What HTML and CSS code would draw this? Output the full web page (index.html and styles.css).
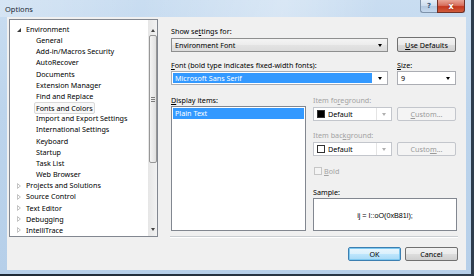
FILE: index.html
```html
<!DOCTYPE html>
<html>

<head>
    <title>Options</title>
    <link rel="stylesheet" href="styles.css">
</head>
<body>
    <div class="window">
        <div class="titlebar">
            <span class="title">Options</span>
            <div class="caption-buttons">
                <span class="caption-btn help">?</span>
                <span class="caption-btn close">x</span>
            </div>
        </div>

        <div class="client">
            <div class="tree">
                <div class="tree-list">
                    <div class="tree-row"><span class="twisty"><span class="open"></span></span>Environment</div>
                    <div class="tree-row child">General</div>
                    <div class="tree-row child">Add-in/Macros Security</div>
                    <div class="tree-row child">AutoRecover</div>
                    <div class="tree-row child">Documents</div>
                    <div class="tree-row child">Extension Manager</div>
                    <div class="tree-row child">Find and Replace</div>
                    <div class="tree-row child"><span class="selected">Fonts and Colors</span></div>
                    <div class="tree-row child">Import and Export Settings</div>
                    <div class="tree-row child">International Settings</div>
                    <div class="tree-row child">Keyboard</div>
                    <div class="tree-row child">Startup</div>
                    <div class="tree-row child">Task List</div>
                    <div class="tree-row child">Web Browser</div>
                    <div class="tree-row"><span class="twisty"><svg class="closed" viewBox="0 0 5 7"><path d="M0.5 0.5 L4.2 3.5 L0.5 6.5 Z"/></svg></span>Projects and Solutions</div>
                    <div class="tree-row"><span class="twisty"><svg class="closed" viewBox="0 0 5 7"><path d="M0.5 0.5 L4.2 3.5 L0.5 6.5 Z"/></svg></span>Source Control</div>
                    <div class="tree-row"><span class="twisty"><svg class="closed" viewBox="0 0 5 7"><path d="M0.5 0.5 L4.2 3.5 L0.5 6.5 Z"/></svg></span>Text Editor</div>
                    <div class="tree-row"><span class="twisty"><svg class="closed" viewBox="0 0 5 7"><path d="M0.5 0.5 L4.2 3.5 L0.5 6.5 Z"/></svg></span>Debugging</div>
                    <div class="tree-row"><span class="twisty"><svg class="closed" viewBox="0 0 5 7"><path d="M0.5 0.5 L4.2 3.5 L0.5 6.5 Z"/></svg></span>IntelliTrace</div>
                </div>
                <div class="scrollbar">
                    <div class="scroll-btn"><span class="arrow-up"></span></div>
                    <div class="scroll-track">
                        <div class="thumb"><span class="grip"></span></div>
                    </div>
                    <div class="scroll-btn"><span class="arrow-down"></span></div>
                </div>
            </div>

            <div class="settings">
                <div class="label">Show se<u>t</u>tings for:</div>
                <div class="row">
                    <div class="combo combo-list wide">
                        <span class="combo-text">Environment Font</span>
                        <span class="combo-arrow"></span>
                    </div>
                    <button type="button" class="btn small"><u>U</u>se Defaults</button>
                </div>

                <div class="row labels">
                    <div class="label wide"><u>F</u>ont (bold type indicates fixed-width fonts):</div>
                    <div class="label small"><u>S</u>ize:</div>
                </div>
                <div class="row">
                    <div class="combo wide">
                        <span class="combo-text"><span class="highlight">Microsoft Sans Serif</span></span>
                        <span class="combo-arrow"></span>
                    </div>
                    <div class="combo small">
                        <span class="combo-text">9</span>
                        <span class="combo-arrow"></span>
                    </div>
                </div>

                <div class="items">
                    <div class="items-left">
                        <div class="label"><u>D</u>isplay items:</div>
                        <div class="listbox">
                            <div class="list-row">Plain Text</div>
                        </div>
                    </div>
                    <div class="items-right">
                        <div class="label disabled">Item fo<u>r</u>eground:</div>
                        <div class="row">
                            <div class="combo color-combo">
                                <span class="swatch black"></span>
                                <span class="combo-text">Default</span>
                                <span class="combo-arrow grey"></span>
                            </div>
                            <button type="button" class="btn small" disabled><u>C</u>ustom...</button>
                        </div>

                        <div class="label disabled gap-top">Item bac<u>k</u>ground:</div>
                        <div class="row">
                            <div class="combo color-combo">
                                <span class="swatch white"></span>
                                <span class="combo-text">Default</span>
                                <span class="combo-arrow grey"></span>
                            </div>
                            <button type="button" class="btn small" disabled>Custo<u>m</u>...</button>
                        </div>

                        <div class="check-row disabled"><span class="checkbox"></span><span><u>B</u>old</span></div>

                        <div class="label sample-label">Sample:</div>
                        <div class="sample">ij = I::oO(0xB81l);</div>
                    </div>
                </div>

                <div class="separator"></div>

                <div class="dialog-buttons">
                    <button type="button" class="btn dialog default">OK</button>
                    <button type="button" class="btn dialog">Cancel</button>
                </div>
            </div>
        </div>
    </div>
</body>
</html>
```

FILE: styles.css
```css
body
{
    margin: 0;
    width: 474px;
    height: 276px;
    overflow: hidden;
    background: linear-gradient(90deg, #1f2a36, #2e3d4d);
    font-family: 'Noto Sans', sans-serif;
    font-size: 7.2px;
    color: black;
}

.window
{
    width: 471px;
    height: 274px;
    display: flex;
    flex-direction: column;
    background: linear-gradient(180deg, #c9ddf1 0%, #bcd4ec 40%, #b6cfe9 100%);
    box-sizing: border-box;
}

.titlebar
{
    height: 17px;
    display: flex;
    justify-content: space-between;
    align-items: flex-start;
    padding: 0 6px 0 5px;
    background: linear-gradient(100deg, rgba(255, 255, 255, 0.25) 0%, rgba(255, 255, 255, 0) 30%, rgba(255, 255, 255, 0.3) 60%, rgba(255, 255, 255, 0) 80%);
}

.title
{
    font-size: 7.5px;
    line-height: 19px;
    color: #1e2a36;
}

.caption-buttons
{
    display: flex;
}

.caption-btn
{
    height: 13px;
    display: flex;
    justify-content: center;
    align-items: center;
    font-family: 'DejaVu Sans', sans-serif;
    font-weight: bold;
    color: white;
    box-sizing: border-box;
}

.help
{
    width: 17px;
    font-size: 7px;
    color: #3a5a7c;
    background: linear-gradient(180deg, #e4edf7 0%, #cbdbed 50%, #b3c8e0 51%, #c6d9ee 100%);
    border: 1px solid #7f93ab;
    border-top: none;
    border-right: none;
    border-radius: 0 0 0 3px;
}

.close
{
    width: 28px;
    font-size: 8px;
    background: linear-gradient(180deg, #e8a597 0%, #d8705e 45%, #c5381f 55%, #d05c3c 100%);
    border: 1px solid #6f3128;
    border-top: none;
    border-radius: 0 0 3px 0;
    text-shadow: 0 0 2px #7a1a0a;
}

.client
{
    flex: 1;
    margin: 0 5px 4px 7px;
    background: #f0f0f0;
    display: flex;
    padding: 2px 0 0 2px;
}

/* tree */

.tree
{
    width: 149px;
    height: 218px;
    border: 1px solid #828790;
    background: white;
    display: flex;
    box-sizing: border-box;
}

.tree-list
{
    flex: 1;
    padding-top: 4px;
    overflow: hidden;
}

.tree-row
{
    height: 11.17px;
    line-height: 11.17px;
    padding-left: 7px;
    display: flex;
    align-items: center;
    white-space: nowrap;
}

.tree-row.child
{
    padding-left: 26px;
}

.twisty
{
    width: 9px;
    height: 11px;
    display: flex;
    align-items: center;
}

.twisty .open
{
    width: 0;
    height: 0;
    border-left: 4px solid transparent;
    border-bottom: 4px solid #3c3c3c;
    margin-top: 1px;
}

.twisty .closed
{
    width: 4px;
    height: 6px;
    fill: none;
    stroke: #a6a6a6;
    stroke-width: 0.9;
}

.selected
{
    padding: 0 1px;
    margin-left: -2px;
    line-height: 10px;
    border: 1px solid #d9d9d9;
    border-radius: 2px;
    background: #f8f8f8;
}

.scrollbar
{
    width: 9px;
    display: flex;
    flex-direction: column;
    background: linear-gradient(90deg, #e6e6e6, #f2f2f2);
}

.scroll-btn
{
    height: 15px;
    display: flex;
    justify-content: center;
    align-items: center;
}

.arrow-up
{
    border-left: 2.5px solid transparent;
    border-right: 2.5px solid transparent;
    border-bottom: 3px solid #444;
    margin-top: 5px;
}

.arrow-down
{
    border-left: 2.5px solid transparent;
    border-right: 2.5px solid transparent;
    border-top: 3px solid #444;
    margin-top: 2px;
}

.scroll-track
{
    flex: 1;
}

.thumb
{
    height: 128px;
    margin: 0 0 0 1px;
    border: 1px solid #979797;
    border-radius: 2px;
    background: linear-gradient(90deg, #f4f4f4, #e0e0e0);
    display: flex;
    justify-content: center;
    align-items: center;
    box-sizing: border-box;
}

.grip
{
    width: 4px;
    height: 5px;
    background: repeating-linear-gradient(180deg, #7b7b7b 0, #7b7b7b 1px, transparent 1px, transparent 2px);
}

/* settings */

.settings
{
    width: 287px;
    margin-left: 13px;
    padding-top: 7px;
    display: flex;
    flex-direction: column;
}

.label
{
    height: 10px;
    line-height: 10px;
    white-space: nowrap;
    margin-bottom: 2px;
}

.labels
{
    margin-top: 8px;
}

.labels .label
{
    margin-bottom: 1px;
}

.disabled
{
    color: #a3a3a3;
}

.row
{
    display: flex;
    gap: 9px;
}

.wide
{
    width: 217px;
}

.small
{
    width: 59px;
}

.combo
{
    height: 14px;
    display: flex;
    align-items: center;
    border: 1px solid #abadb3;
    background: white;
    box-sizing: border-box;
    padding-left: 1px;
}

.combo-list
{
    border-color: #8e8f8f;
    background: linear-gradient(180deg, #f4f4f4 0%, #ececec 50%, #e3e3e3 51%, #dcdcdc 100%);
    padding-left: 3px;
}

.combo-text
{
    flex: 1;
    display: flex;
    align-items: center;
    white-space: nowrap;
}

.highlight
{
    flex: 1;
    line-height: 10px;
    padding-left: 2px;
    margin-right: 1px;
    background: #3399ff;
    color: white;
}

.combo.small .combo-text
{
    padding-left: 2px;
}

.combo-arrow
{
    width: 14px;
    height: 12px;
    display: flex;
    justify-content: center;
    align-items: center;
}

.combo-arrow::after
{
    content: "";
    border-left: 2.5px solid transparent;
    border-right: 2.5px solid transparent;
    border-top: 3px solid black;
}

.combo-arrow.grey::after
{
    border-top-color: #b0b0b0;
}

.color-combo
{
    width: 79px;
    border-color: #c3c6cc;
    padding-left: 3px;
    gap: 3px;
}

.color-combo .combo-arrow
{
    border-left: 1px solid #e4e4e4;
}

.swatch
{
    width: 8px;
    height: 8px;
    box-sizing: border-box;
    border: 1px solid #333;
}

.swatch.black
{
    background: black;
}

.swatch.white
{
    background: white;
}

.btn
{
    height: 15px;
    margin-top: -1px;
    padding: 0;
    font-family: inherit;
    font-size: 7.2px;
    color: black;
    border: 1px solid #707070;
    border-radius: 2px;
    background: linear-gradient(180deg, #f2f2f2 0%, #ebebeb 50%, #dddddd 51%, #cfcfcf 100%);
    box-sizing: border-box;
}

.btn:disabled
{
    color: #9a9a9a;
    border-color: #c3c6cc;
    background: #f4f4f4;
}

.items-right .row
{
    gap: 5px;
}

.items-right .btn
{
    height: 14px;
    margin-top: 0;
}

.items
{
    margin-top: 10px;
    display: flex;
    gap: 7px;
}

.items-left
{
    width: 135px;
}

.items-left .label
{
    margin-bottom: 1px;
}

.listbox
{
    height: 125px;
    border: 1px solid #828790;
    background: white;
    padding: 1px;
    box-sizing: border-box;
}

.list-row
{
    height: 11px;
    line-height: 11px;
    padding-left: 2px;
    background: #3399ff;
    color: white;
}

.items-right
{
    width: 144px;
    display: flex;
    flex-direction: column;
}

.gap-top
{
    margin-top: 9px;
}

.check-row
{
    margin-top: 10px;
    height: 10px;
    display: flex;
    align-items: center;
    gap: 2px;
}

.checkbox
{
    width: 8px;
    height: 8px;
    border: 1px solid #c6c6c6;
    background: #f4f4f4;
    box-sizing: border-box;
    margin-left: 1px;
}

.sample-label
{
    margin-top: 11px;
    margin-bottom: 1px;
}

.sample
{
    height: 33px;
    border: 1px solid #828790;
    background: white;
    box-sizing: border-box;
    display: flex;
    justify-content: center;
    align-items: center;
    padding-top: 2px;
    font-family: 'Liberation Sans', sans-serif;
    font-size: 7.2px;
}

.separator
{
    margin-top: 5px;
    height: 0;
    border-top: 1px solid #c9cdd1;
    border-bottom: 1px solid white;
    margin-left: -1px;
}

.dialog-buttons
{
    margin-top: 9px;
    display: flex;
    justify-content: flex-end;
    gap: 4px;
}

.btn.dialog
{
    width: 53px;
    height: 14px;
    margin-top: 0;
}

.btn.default
{
    border-color: #3c7fb1;
    background: linear-gradient(180deg, #eaf6fd 0%, #d9f0fc 50%, #bee6fd 51%, #a7d9f5 100%);
    box-shadow: inset 0 0 0 1px #7ec8f0;
}
```
